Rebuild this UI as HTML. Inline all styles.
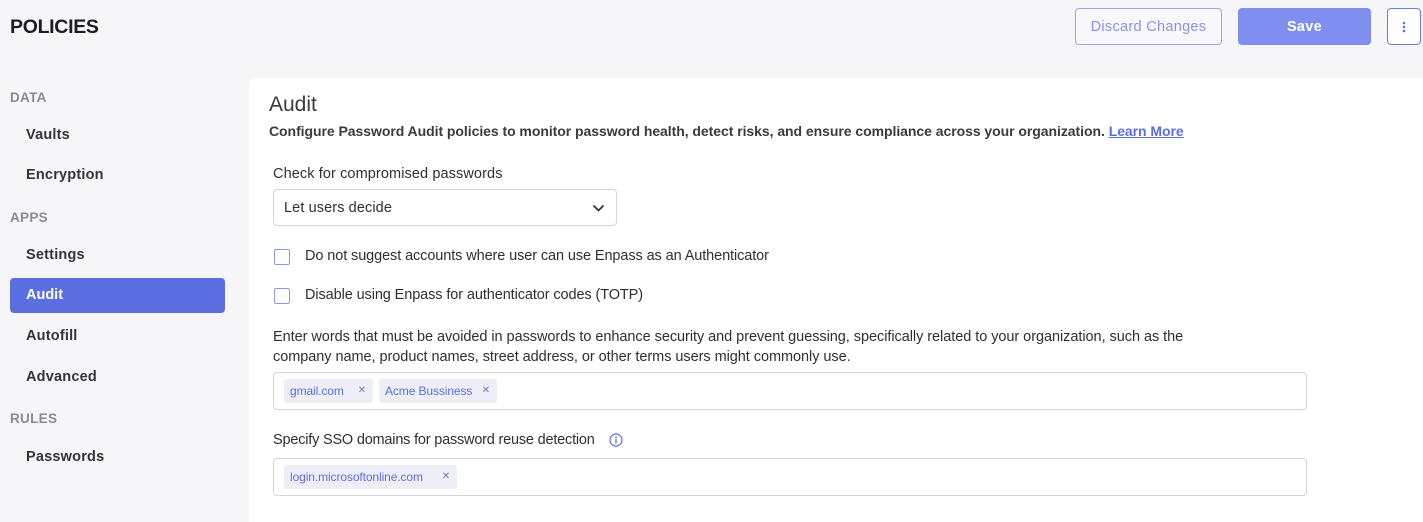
<!DOCTYPE html>
<html><head><meta charset="utf-8"><style>
*{box-sizing:border-box;margin:0;padding:0}
body{width:1423px;height:522px;overflow:hidden;background:#f6f6f8;font-family:"Liberation Sans",sans-serif;color:#2b2b33;position:relative}
.a{position:absolute;white-space:nowrap}
.h1{left:10px;top:16px;font-size:19.5px;font-weight:bold;color:#1c1c22;letter-spacing:-.3px}
.sec{left:10px;font-size:13.5px;font-weight:bold;color:#8a8a93;letter-spacing:.3px}
.it{left:26px;font-size:14.5px;font-weight:bold;color:#33333b;letter-spacing:.2px}
.act{left:10px;top:278px;width:215px;height:35px;background:#5b6ee1;border-radius:4px;color:#fff;font-size:14.5px;font-weight:bold;padding:9px 16px}
.btn{top:8px;height:37px;border-radius:4px;font-size:14.5px;display:flex;align-items:center;justify-content:center;letter-spacing:.3px}
.panel{left:249px;top:78px;width:1174px;height:444px;background:#fff;border-radius:6px 0 0 0}
.box{border:1px solid #d3d3da;border-radius:4px;background:#fff}
.cb{width:16px;height:16px;border:1.5px solid #8a97ec;border-radius:2px}
.lbl{font-size:14.5px;color:#2e2e36;letter-spacing:.1px}
.tag{position:absolute;top:6px;height:24px;background:#eeeff6;border-radius:3px;color:#5b6ee1;font-size:12px;padding:5px 6px;letter-spacing:-.1px}
.tag b{position:absolute;right:7px;top:6px;font-weight:normal;color:#6b78c9;font-size:10px}
</style></head><body>
<div class="a h1">POLICIES</div>
<div class="a btn" style="left:1075px;width:147px;border:1px solid #9aa4ee;color:#8893e6;background:#f8f8fb">Discard Changes</div>
<div class="a btn" style="left:1238px;width:133px;background:#7f8ff0;color:#fff;font-weight:bold">Save</div>
<div class="a btn" style="left:1387px;width:34px;border:1px solid #6b7be6;background:#fff">
<svg width="4" height="12"><circle cx="2" cy="2" r="1.3" fill="#5b6ee1"/><circle cx="2" cy="6" r="1.3" fill="#5b6ee1"/><circle cx="2" cy="10" r="1.3" fill="#5b6ee1"/></svg></div>

<div class="a sec" style="top:90px">DATA</div>
<div class="a it" style="top:127px">Vaults</div>
<div class="a it" style="top:167px">Encryption</div>
<div class="a sec" style="top:210px">APPS</div>
<div class="a it" style="top:247px">Settings</div>
<div class="a act">Audit</div>
<div class="a it" style="top:328px">Autofill</div>
<div class="a it" style="top:369px">Advanced</div>
<div class="a sec" style="top:411px">RULES</div>
<div class="a it" style="top:449px">Passwords</div>

<div class="a panel"></div>
<div class="a" style="left:269px;top:93px;font-size:21px;color:#3a3a42">Audit</div>
<div class="a" style="left:269px;top:123px;font-size:14px;font-weight:bold;color:#3a3a42;letter-spacing:-.05px">Configure Password Audit policies to monitor password health, detect risks, and ensure compliance across your organization. <span style="color:#5b6ee1;text-decoration:underline">Learn More</span></div>

<div class="a lbl" style="left:273px;top:166px">Check for compromised passwords</div>
<div class="a box" style="left:273px;top:189px;width:344px;height:37px"><span class="a lbl" style="left:10px;top:10px">Let users decide</span>
<svg class="a" style="left:318px;top:14px" width="13" height="8"><path d="M1.5 1.5L6.5 6.5L11.5 1.5" stroke="#333" stroke-width="1.8" fill="none"/></svg></div>

<div class="a cb" style="left:274px;top:249px"></div>
<div class="a lbl" style="left:305px;top:248px;letter-spacing:-.1px">Do not suggest accounts where user can use Enpass as an Authenticator</div>
<div class="a cb" style="left:274px;top:288px"></div>
<div class="a lbl" style="left:305px;top:287px;letter-spacing:-.1px">Disable using Enpass for authenticator codes (TOTP)</div>

<div class="a lbl" style="left:273px;top:327px;line-height:20px;white-space:normal;width:960px;letter-spacing:-.05px">Enter words that must be avoided in passwords to enhance security and prevent guessing, specifically related to your organization, such as the company name, product names, street address, or other terms users might commonly use.</div>
<div class="a box" style="left:273px;top:372px;width:1034px;height:38px">
<div class="tag" style="left:10px;width:89px">gmail.com<b>✕</b></div>
<div class="tag" style="left:105px;width:118px">Acme Bussiness<b>✕</b></div></div>

<div class="a lbl" style="left:273px;top:432px;letter-spacing:-.2px">Specify SSO domains for password reuse detection</div>
<svg class="a" style="left:609px;top:433px" width="14" height="14"><circle cx="7" cy="7" r="6" stroke="#5b6ee1" stroke-width="1.2" fill="none"/><circle cx="7" cy="4.2" r=".9" fill="#5b6ee1"/><path d="M7 6v4.5" stroke="#5b6ee1" stroke-width="1.3"/></svg>
<div class="a box" style="left:273px;top:458px;width:1034px;height:38px">
<div class="tag" style="left:10px;width:173px">login.microsoftonline.com<b>✕</b></div></div>
</body></html>
